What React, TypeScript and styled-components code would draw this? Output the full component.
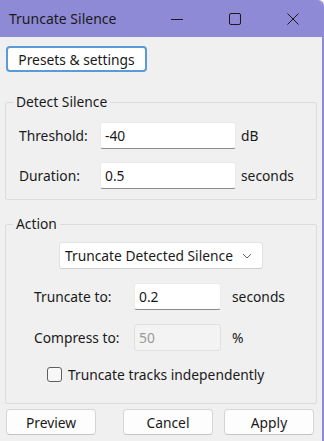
import React from "react";
import styled, {createGlobalStyle} from "styled-components";

const GlobalStyle = createGlobalStyle`
  html, body {
    margin: 0;
    padding: 0;
    background: #f0f0f0;
  }
  body {
    font-family: "Noto Sans", "Open Sans", sans-serif;
    font-size: 13.8px;
    color: #1a1a1a;
  }
`

function App() {
  return (
    <>
      <GlobalStyle/>
      <Window>
        <TitleBar>
          <Title>Truncate Silence</Title>
          <Controls>
            <Control>
              <svg width="14" height="14" viewBox="0 0 14 14">
                <path d="M1 7.5h12" stroke="#1a1a1a" strokeWidth="1"/>
              </svg>
            </Control>
            <Control>
              <svg width="14" height="14" viewBox="0 0 14 14">
                <rect x="1.5" y="1.5" width="11" height="11" rx="1.5" fill="none" stroke="#1a1a1a" strokeWidth="1"/>
              </svg>
            </Control>
            <Control>
              <svg width="14" height="14" viewBox="0 0 14 14">
                <path d="M1.5 1.5l11 11M12.5 1.5l-11 11" stroke="#1a1a1a" strokeWidth="1"/>
              </svg>
            </Control>
          </Controls>
        </TitleBar>

        <Body>
          <PresetsButton>Presets &amp; settings</PresetsButton>

          <Group>
            <Legend>Detect Silence</Legend>
            <FieldGrid>
              <span>Threshold:</span>
              <TextInput $width={136}>-40</TextInput>
              <span>dB</span>
              <span>Duration:</span>
              <TextInput $width={136}>0.5</TextInput>
              <span>seconds</span>
            </FieldGrid>
          </Group>

          <Group>
            <Legend>Action</Legend>
            <ActionBody>
              <Select>
                <span>Truncate Detected Silence</span>
                <svg width="10" height="6" viewBox="0 0 10 6">
                  <path d="M1 1l4 4 4-4" fill="none" stroke="#666" strokeWidth="1"/>
                </svg>
              </Select>
              <ActionGrid>
                <span>Truncate to:</span>
                <TextInput $width={87}>0.2</TextInput>
                <span>seconds</span>
                <span>Compress to:</span>
                <TextInput $width={87} $disabled>50</TextInput>
                <span>%</span>
              </ActionGrid>
              <CheckRow>
                <CheckBox/>
                <span>Truncate tracks independently</span>
              </CheckRow>
            </ActionBody>
          </Group>

          <ButtonRow>
            <Button>Preview</Button>
            <RightButtons>
              <Button>Cancel</Button>
              <Button>Apply</Button>
            </RightButtons>
          </ButtonRow>
        </Body>
      </Window>
    </>
  );
}

const Window = styled.div`
  width: 322px;
  height: 441px;
  border-right: 2px solid #8e8ad6;
  border-top-right-radius: 6px;
  background: #f0f0f0;
  overflow: hidden;
  display: flex;
  flex-direction: column;
`

const TitleBar = styled.div`
  height: 37px;
  background: #8e8ad6;
  display: flex;
  align-items: center;
  justify-content: space-between;
  padding-left: 9px;
`

const Title = styled.div`
  font-size: 14px;
  color: #1a1a1a;
  padding-bottom: 1px;
`

const Controls = styled.div`
  display: flex;
  align-items: center;
  height: 100%;
`

const Control = styled.div`
  width: 58px;
  height: 100%;
  display: flex;
  align-items: center;
  justify-content: center;
`

const Body = styled.div`
  padding: 9px 8px 0 5px;
  display: flex;
  flex-direction: column;
`

const PresetsButton = styled.div`
  align-self: flex-start;
  width: 141px;
  height: 26px;
  box-sizing: border-box;
  border: 2px solid #5a9ad8;
  border-radius: 4px;
  background: #fff;
  display: flex;
  align-items: center;
  justify-content: center;
  margin-left: 1px;
`

const Group = styled.fieldset`
  margin: 22px 0 0 0;
  padding: 0;
  border: 1px solid #dcdcdc;
  border-radius: 2px;
  box-sizing: border-box;
  width: 312px;

  & + & {
    margin-top: 16px;
  }
`

const Legend = styled.legend`
  margin-left: 7px;
  padding: 0 3px 0 3px;
  line-height: 16px;
`

const FieldGrid = styled.div`
  display: grid;
  grid-template-columns: 76px 136px auto;
  column-gap: 5px;
  row-gap: 13px;
  align-items: center;
  padding: 12px 0 10px 13px;
`

const TextInput = styled.div<{ $width: number, $disabled?: boolean }>`
  width: ${p => p.$width}px;
  height: 27px;
  box-sizing: border-box;
  padding: 0 4px;
  display: flex;
  align-items: center;
  border-radius: 3px;
  background: ${p => p.$disabled ? "#f3f3f3" : "#fff"};
  color: ${p => p.$disabled ? "#9a9a9a" : "#1a1a1a"};
  border: 1px solid ${p => p.$disabled ? "#e0e0e0" : "#ececec"};
  border-bottom: 1px solid ${p => p.$disabled ? "#e0e0e0" : "#8a8a8a"};
`

const ActionBody = styled.div`
  display: flex;
  flex-direction: column;
  align-items: center;
  padding: 10px 0 19px 0;
`

const Select = styled.div`
  width: 204px;
  height: 27px;
  box-sizing: border-box;
  padding: 0 10px 0 5px;
  background: #fff;
  border: 1px solid #e2e2e2;
  border-bottom-color: #cfcfcf;
  border-radius: 3px;
  display: flex;
  align-items: center;
  justify-content: space-between;
`

const ActionGrid = styled.div`
  align-self: flex-start;
  display: grid;
  grid-template-columns: 89px 87px auto;
  column-gap: 11px;
  row-gap: 14px;
  align-items: center;
  padding: 14px 0 0 28px;
`

const CheckRow = styled.div`
  align-self: flex-start;
  display: flex;
  align-items: center;
  gap: 6px;
  padding: 14px 0 0 41px;
`

const CheckBox = styled.div`
  width: 15px;
  height: 15px;
  box-sizing: border-box;
  border: 1px solid #5f5f5f;
  border-radius: 3px;
  background: #f7f7f7;
`

const ButtonRow = styled.div`
  display: flex;
  justify-content: space-between;
  margin-top: 5px;
  padding-left: 1px;
`

const RightButtons = styled.div`
  display: flex;
  gap: 11px;
`

const Button = styled.div`
  width: 90px;
  height: 26px;
  box-sizing: border-box;
  background: #fdfdfd;
  border: 1px solid #d6d6d6;
  border-bottom-color: #c4c4c4;
  border-radius: 4px;
  display: flex;
  align-items: center;
  justify-content: center;
`

export default App;
